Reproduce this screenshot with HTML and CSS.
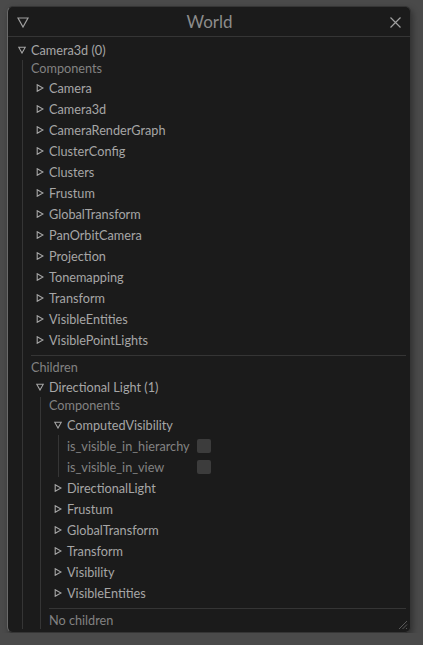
FILE: index.html
```html
<!DOCTYPE html>
<html>
<head>
  <meta charset="utf-8">
  <title>World</title>
  <link rel="stylesheet" href="styles.css">
</head>
<body>

  <div class="window">

    <div class="titlebar">
      <svg class="collapse" viewBox="0 0 12 11"><polygon points="1,1 11,1 6,10" /></svg>
      <span class="title">World</span>
      <svg class="close" viewBox="0 0 11 11"><path d="M0.5 0.5 L10.5 10.5 M10.5 0.5 L0.5 10.5" /></svg>
    </div>

    <div class="content">
      <div class="node">
        <div class="head"><svg class="tri" viewBox="0 0 8 8"><polygon points="0.7,1.2 7.3,1.2 4,7" /></svg>Camera3d (0)</div>
        <div class="body">
          <div class="label">Components</div>
          <div class="list">
            <div class="head"><svg class="tri" viewBox="0 0 8 8"><polygon points="1.2,0.7 7,4 1.2,7.3" /></svg>Camera</div>
            <div class="head"><svg class="tri" viewBox="0 0 8 8"><polygon points="1.2,0.7 7,4 1.2,7.3" /></svg>Camera3d</div>
            <div class="head"><svg class="tri" viewBox="0 0 8 8"><polygon points="1.2,0.7 7,4 1.2,7.3" /></svg>CameraRenderGraph</div>
            <div class="head"><svg class="tri" viewBox="0 0 8 8"><polygon points="1.2,0.7 7,4 1.2,7.3" /></svg>ClusterConfig</div>
            <div class="head"><svg class="tri" viewBox="0 0 8 8"><polygon points="1.2,0.7 7,4 1.2,7.3" /></svg>Clusters</div>
            <div class="head"><svg class="tri" viewBox="0 0 8 8"><polygon points="1.2,0.7 7,4 1.2,7.3" /></svg>Frustum</div>
            <div class="head"><svg class="tri" viewBox="0 0 8 8"><polygon points="1.2,0.7 7,4 1.2,7.3" /></svg>GlobalTransform</div>
            <div class="head"><svg class="tri" viewBox="0 0 8 8"><polygon points="1.2,0.7 7,4 1.2,7.3" /></svg>PanOrbitCamera</div>
            <div class="head"><svg class="tri" viewBox="0 0 8 8"><polygon points="1.2,0.7 7,4 1.2,7.3" /></svg>Projection</div>
            <div class="head"><svg class="tri" viewBox="0 0 8 8"><polygon points="1.2,0.7 7,4 1.2,7.3" /></svg>Tonemapping</div>
            <div class="head"><svg class="tri" viewBox="0 0 8 8"><polygon points="1.2,0.7 7,4 1.2,7.3" /></svg>Transform</div>
            <div class="head"><svg class="tri" viewBox="0 0 8 8"><polygon points="1.2,0.7 7,4 1.2,7.3" /></svg>VisibleEntities</div>
            <div class="head"><svg class="tri" viewBox="0 0 8 8"><polygon points="1.2,0.7 7,4 1.2,7.3" /></svg>VisiblePointLights</div>
          </div>
          <div class="sep"></div>
          <div class="label">Children</div>
          <div class="list">
            <div class="node">
              <div class="head"><svg class="tri" viewBox="0 0 8 8"><polygon points="0.7,1.2 7.3,1.2 4,7" /></svg>Directional Light (1)</div>
              <div class="body">
                <div class="label">Components</div>
                <div class="list">
                  <div class="node">
                    <div class="head"><svg class="tri" viewBox="0 0 8 8"><polygon points="0.7,1.2 7.3,1.2 4,7" /></svg>ComputedVisibility</div>
                    <div class="body props">
                      <span class="prop">is_visible_in_hierarchy</span><span class="check"></span>
                      <span class="prop">is_visible_in_view</span><span class="check"></span>
                    </div>
                  </div>
                  <div class="head"><svg class="tri" viewBox="0 0 8 8"><polygon points="1.2,0.7 7,4 1.2,7.3" /></svg>DirectionalLight</div>
                  <div class="head"><svg class="tri" viewBox="0 0 8 8"><polygon points="1.2,0.7 7,4 1.2,7.3" /></svg>Frustum</div>
                  <div class="head"><svg class="tri" viewBox="0 0 8 8"><polygon points="1.2,0.7 7,4 1.2,7.3" /></svg>GlobalTransform</div>
                  <div class="head"><svg class="tri" viewBox="0 0 8 8"><polygon points="1.2,0.7 7,4 1.2,7.3" /></svg>Transform</div>
                  <div class="head"><svg class="tri" viewBox="0 0 8 8"><polygon points="1.2,0.7 7,4 1.2,7.3" /></svg>Visibility</div>
                  <div class="head"><svg class="tri" viewBox="0 0 8 8"><polygon points="1.2,0.7 7,4 1.2,7.3" /></svg>VisibleEntities</div>
                </div>
                <div class="sep"></div>
                <div class="label">No children</div>
              </div>
            </div>
          </div>
        </div>
      </div>
    </div>

    <svg class="grip" viewBox="0 0 12 12"><path d="M11 3 L3 11 M11 6.5 L6.5 11 M11 10 L10 11" /></svg>
  </div>

</body>
</html>
```

FILE: styles.css
```css
body {
  margin: 0px;
  background-color: #4a4a4a;
  font-family: Lato, 'Noto Sans', sans-serif;
  font-size: 12.7px;
  color: #a6a6a6;
}
.window {
  position: relative;
  margin: 6px 0 0 7px;
  width: 404px;
  height: 627px;
  box-sizing: border-box;
  background-color: #1b1b1b;
  border: 1px solid #353535;
  border-left-color: #6a6a6a;
  border-radius: 6px;
  box-shadow: 2px 3px 6px rgba(0, 0, 0, 0.35);
  overflow: hidden;
}
.titlebar {
  display: flex;
  align-items: center;
  justify-content: space-between;
  height: 29px;
  padding: 0 9px 0 9px;
  border-bottom: 1px solid #353535;
}
.titlebar svg {
  fill: none;
  stroke: #a0a0a0;
  stroke-width: 1.2;
}
.collapse {
  width: 12px;
  height: 11px;
  margin-top: 1px;
}
.close {
  width: 11px;
  height: 11px;
  margin-top: 1px;
}
.title {
  font-size: 17px;
  color: #8c8c8c;
  margin-bottom: 1px;
}
.content {
  padding: 2px 4px 3px 9px;
}
.head {
  display: flex;
  align-items: center;
  height: 21px;
  white-space: nowrap;
}
.tri {
  width: 8px;
  height: 8px;
  margin: 0 5px 0 1px;
  fill: none;
  stroke: #a6a6a6;
  stroke-width: 1.1;
}
.body {
  margin-left: 5px;
  padding-left: 8px;
  border-left: 1px solid #353535;
}
.label {
  height: 17px;
  line-height: 17px;
  color: #828282;
}
.list {
  padding-left: 4px;
}
.sep {
  height: 1px;
  margin: 5px 0 3px 0;
  background-color: #353535;
}
.props {
  display: grid;
  grid-template-columns: 130px 14px;
  grid-auto-rows: 21px;
  align-items: center;
}
.prop {
  color: #828282;
  white-space: nowrap;
}
.check {
  width: 14px;
  height: 14px;
  border-radius: 2px;
  background-color: #3c3c3c;
}
.grip {
  position: absolute;
  right: 2px;
  bottom: 2px;
  width: 12px;
  height: 12px;
  fill: none;
  stroke: #5a5a5a;
  stroke-width: 1;
}
```
